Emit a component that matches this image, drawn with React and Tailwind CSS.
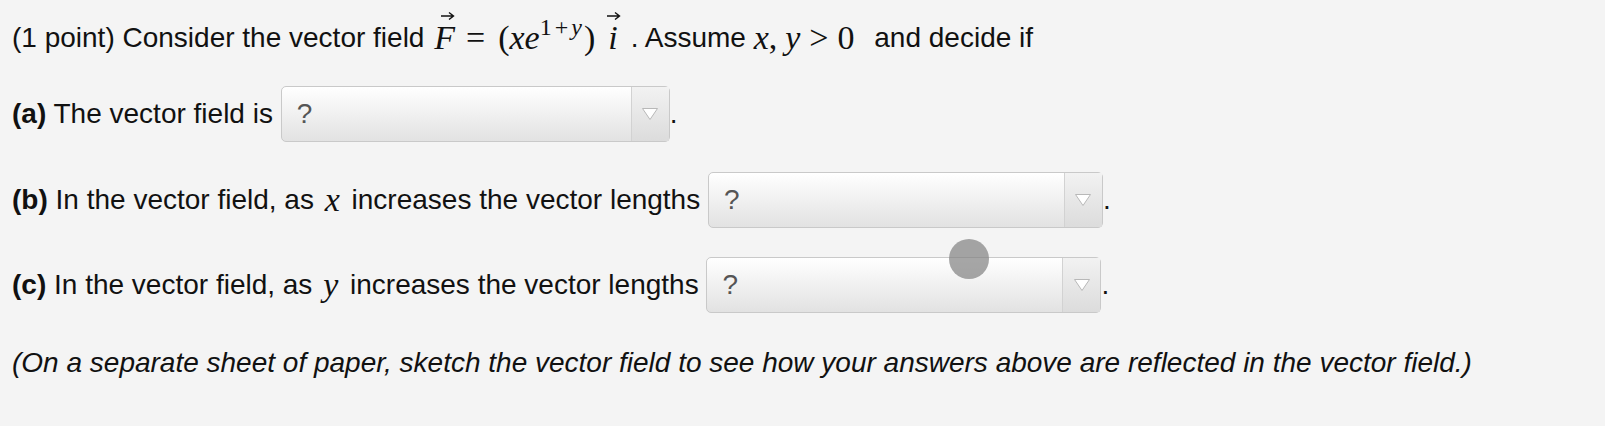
import React from "react";

const Select = ({ width }) => (
  <div
    className="relative flex h-[56px] items-stretch rounded-[5px] border border-[#c9c9c9] bg-gradient-to-b from-[#ffffff] to-[#e2e2e2]"
    style={{ width }}
  >
    <div className="flex flex-1 items-center pl-[15px] text-[28px] text-[#555]">?</div>
    <div className="flex w-[38px] items-center justify-center border-l border-[#d2d2d2] bg-gradient-to-b from-[#f2f2f2] to-[#dcdcdc]">
      <svg width="18" height="14" viewBox="0 0 18 14">
        <path d="M1.5 1.5 L16.5 1.5 L9 12.5 Z" fill="#ffffff" stroke="#b8b8b8" strokeWidth="1" />
      </svg>
    </div>
  </div>
);

const M = ({ children, className = "" }) => (
  <span className={`font-['Liberation_Serif',serif] italic ${className}`}>{children}</span>
);

const R = ({ children, className = "" }) => (
  <span className={`font-['Liberation_Serif',serif] ${className}`}>{children}</span>
);

const Vec = ({ children, left = 6 }) => (
  <span className="relative inline-block">
    <span className="absolute top-[-12px]" style={{ left }}>
      <svg width="15" height="10" viewBox="0 0 15 10">
        <path d="M1 6 L13 6 M9 2.5 L13.5 6 L9 9.5" stroke="#111" strokeWidth="1.4" fill="none" />
      </svg>
    </span>
    {children}
  </span>
);

export default function App() {
  return (
    <div className="relative h-[426px] w-full bg-[#f4f4f4] font-['Liberation_Sans',Arial,sans-serif] text-[28px] leading-[32px] text-[#111]">
      <div className="pl-[12px] pt-[22px]">
        <div className="flex h-[32px] items-center whitespace-pre">
          <span>(1 point) Consider the vector field </span>
          <M className="ml-[2px] text-[34px]">
            <Vec left={6}>F</Vec>
          </M>
          <R className="ml-[11px] mr-[13px] text-[34px]">=</R>
          <R className="text-[34px]">(</R>
          <M className="text-[34px]">xe</M>
          <span className="relative top-[-11px] font-['Liberation_Serif',serif] text-[24px]">
            1<span className="mx-[3px]">+</span>
            <span className="italic">y</span>
          </span>
          <R className="ml-[2px] text-[34px]">)</R>
          <M className="ml-[13px] text-[34px]">
            <Vec left={-2}>i</Vec>
          </M>
          <span className="ml-[13px]">. Assume </span>
          <M className="text-[34px]">x</M>
          <R className="mr-[8px] text-[34px]">,</R>
          <M className="text-[34px]">y</M>
          <R className="mx-[9px] text-[34px]">&gt;</R>
          <R className="text-[34px]">0</R>
          <span className="ml-[12px]"> and decide if</span>
        </div>

        <div className="mt-[32px] flex h-[56px] items-center whitespace-pre">
          <span className="font-bold">(a)</span>
          <span> The vector field is </span>
          <Select width={389} />
          <span>.</span>
        </div>

        <div className="mt-[30px] flex h-[56px] items-center whitespace-pre">
          <span className="font-bold">(b)</span>
          <span> In the vector field, as </span>
          <M className="ml-[3px] mr-[4px] text-[34px]">x</M>
          <span> increases the vector lengths </span>
          <Select width={395} />
          <span>.</span>
        </div>

        <div className="mt-[29px] flex h-[56px] items-center whitespace-pre">
          <span className="font-bold">(c)</span>
          <span> In the vector field, as </span>
          <M className="ml-[3px] mr-[4px] text-[34px]">y</M>
          <span> increases the vector lengths </span>
          <Select width={395} />
          <span>.</span>
        </div>

        <div className="mt-[34px] h-[32px] italic">
          (On a separate sheet of paper, sketch the vector field to see how your answers above are reflected in the vector field.)
        </div>
      </div>

      <div className="absolute left-[949px] top-[239px] h-[40px] w-[40px] rounded-full bg-[#808080]/70" />
    </div>
  );
}
